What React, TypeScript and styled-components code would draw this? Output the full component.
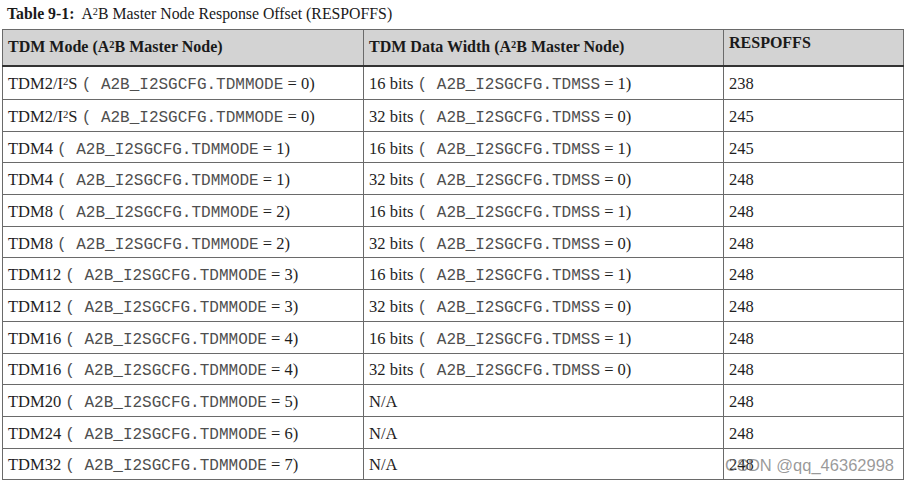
import React from "react";
import styled, { createGlobalStyle } from "styled-components";

const Global = createGlobalStyle`
  html, body { margin: 0; padding: 0; background: #ffffff; }
  body { font-family: "Liberation Serif", "Times New Roman", serif; color: #1e1e1e; }
`;

const Page = styled.div`
  position: relative;
  width: 908px;
  height: 485px;
  padding: 4px 0 0 2px;
  box-sizing: border-box;
  overflow: hidden;
`;

const Caption = styled.div`
  font-size: 15.8px;
  line-height: 20px;
  padding-left: 5px;
  height: 25px;
  color: #1a1a1a;
`;

const CaptionLabel = styled.b`
  font-weight: bold;
  margin-right: 7px;
`;

const Table = styled.table`
  border-collapse: collapse;
  width: 901px;
  table-layout: fixed;
  border: 1.5px solid #5a5a5a;
`;

const HeadCell = styled.th<{ $w: number; $raise?: boolean }>`
  width: ${(p) => p.$w}px;
  height: 36px;
  background: #d3d3d3;
  border: 1.5px solid #6a6a6a;
  border-bottom: 2px solid #333;
  text-align: left;
  vertical-align: top;
  padding: ${(p) => (p.$raise ? "4px" : "8px")} 0 0 5px;
  font-size: 16px;
  font-weight: bold;
  color: #1a1a1a;
  box-sizing: border-box;
`;

const BodyRow = styled.tr<{ $h: number }>`
  height: ${(p) => p.$h}px;
`;

const Cell = styled.td`
  border: 1.5px solid #6a6a6a;
  padding: 3px 0 0 5px;
  font-size: 16.5px;
  color: #1e1e1e;
  vertical-align: middle;
  white-space: nowrap;
  box-sizing: border-box;
`;

const Mono = styled.span`
  font-family: "Liberation Mono", "Courier New", monospace;
  font-size: 16px;
  color: #4f4f4f;
`;

const Sup = styled.sup`
  font-size: 0.65em;
  vertical-align: 0.4em;
  line-height: 0;
`;

const Watermark = styled.div`
  position: absolute;
  left: 725px;
  top: 456px;
  font-family: "Liberation Sans", Arial, sans-serif;
  font-size: 16.5px;
  color: rgba(120, 120, 120, 0.75);
  pointer-events: none;
`;

type Row = { mode: React.ReactNode; n: number; width: React.ReactNode; off: string };

const TDM2 = (
  <>
    TDM2/I<Sup>2</Sup>S
  </>
);

const bits = (b: number, ss: number) => (
  <>
    {b} bits <Mono>( A2B_I2SGCFG.TDMSS</Mono> = {ss})
  </>
);

const rows: Row[] = [
  { mode: TDM2, n: 0, width: bits(16, 1), off: "238" },
  { mode: TDM2, n: 0, width: bits(32, 0), off: "245" },
  { mode: "TDM4", n: 1, width: bits(16, 1), off: "245" },
  { mode: "TDM4", n: 1, width: bits(32, 0), off: "248" },
  { mode: "TDM8", n: 2, width: bits(16, 1), off: "248" },
  { mode: "TDM8", n: 2, width: bits(32, 0), off: "248" },
  { mode: "TDM12", n: 3, width: bits(16, 1), off: "248" },
  { mode: "TDM12", n: 3, width: bits(32, 0), off: "248" },
  { mode: "TDM16", n: 4, width: bits(16, 1), off: "248" },
  { mode: "TDM16", n: 4, width: bits(32, 0), off: "248" },
  { mode: "TDM20", n: 5, width: "N/A", off: "248" },
  { mode: "TDM24", n: 6, width: "N/A", off: "248" },
  { mode: "TDM32", n: 7, width: "N/A", off: "248" },
];

export default function App() {
  return (
    <>
      <Global />
      <Page>
        <Caption>
          <CaptionLabel>Table 9-1:</CaptionLabel>A<Sup>2</Sup>B Master Node Response Offset (RESPOFFS)
        </Caption>
        <Table>
          <thead>
            <tr>
              <HeadCell $w={361}>
                TDM Mode (A<Sup>2</Sup>B Master Node)
              </HeadCell>
              <HeadCell $w={360}>
                TDM Data Width (A<Sup>2</Sup>B Master Node)
              </HeadCell>
              <HeadCell $w={180} $raise>
                RESPOFFS
              </HeadCell>
            </tr>
          </thead>
          <tbody>
            {rows.map((r, i) => (
              <BodyRow key={i} $h={i === 0 ? 34 : 31.7}>
                <Cell>
                  {r.mode} <Mono>( A2B_I2SGCFG.TDMMODE</Mono> = {r.n})
                </Cell>
                <Cell>{r.width}</Cell>
                <Cell>{r.off}</Cell>
              </BodyRow>
            ))}
          </tbody>
        </Table>
        <Watermark>CSDN @qq_46362998</Watermark>
      </Page>
    </>
  );
}
